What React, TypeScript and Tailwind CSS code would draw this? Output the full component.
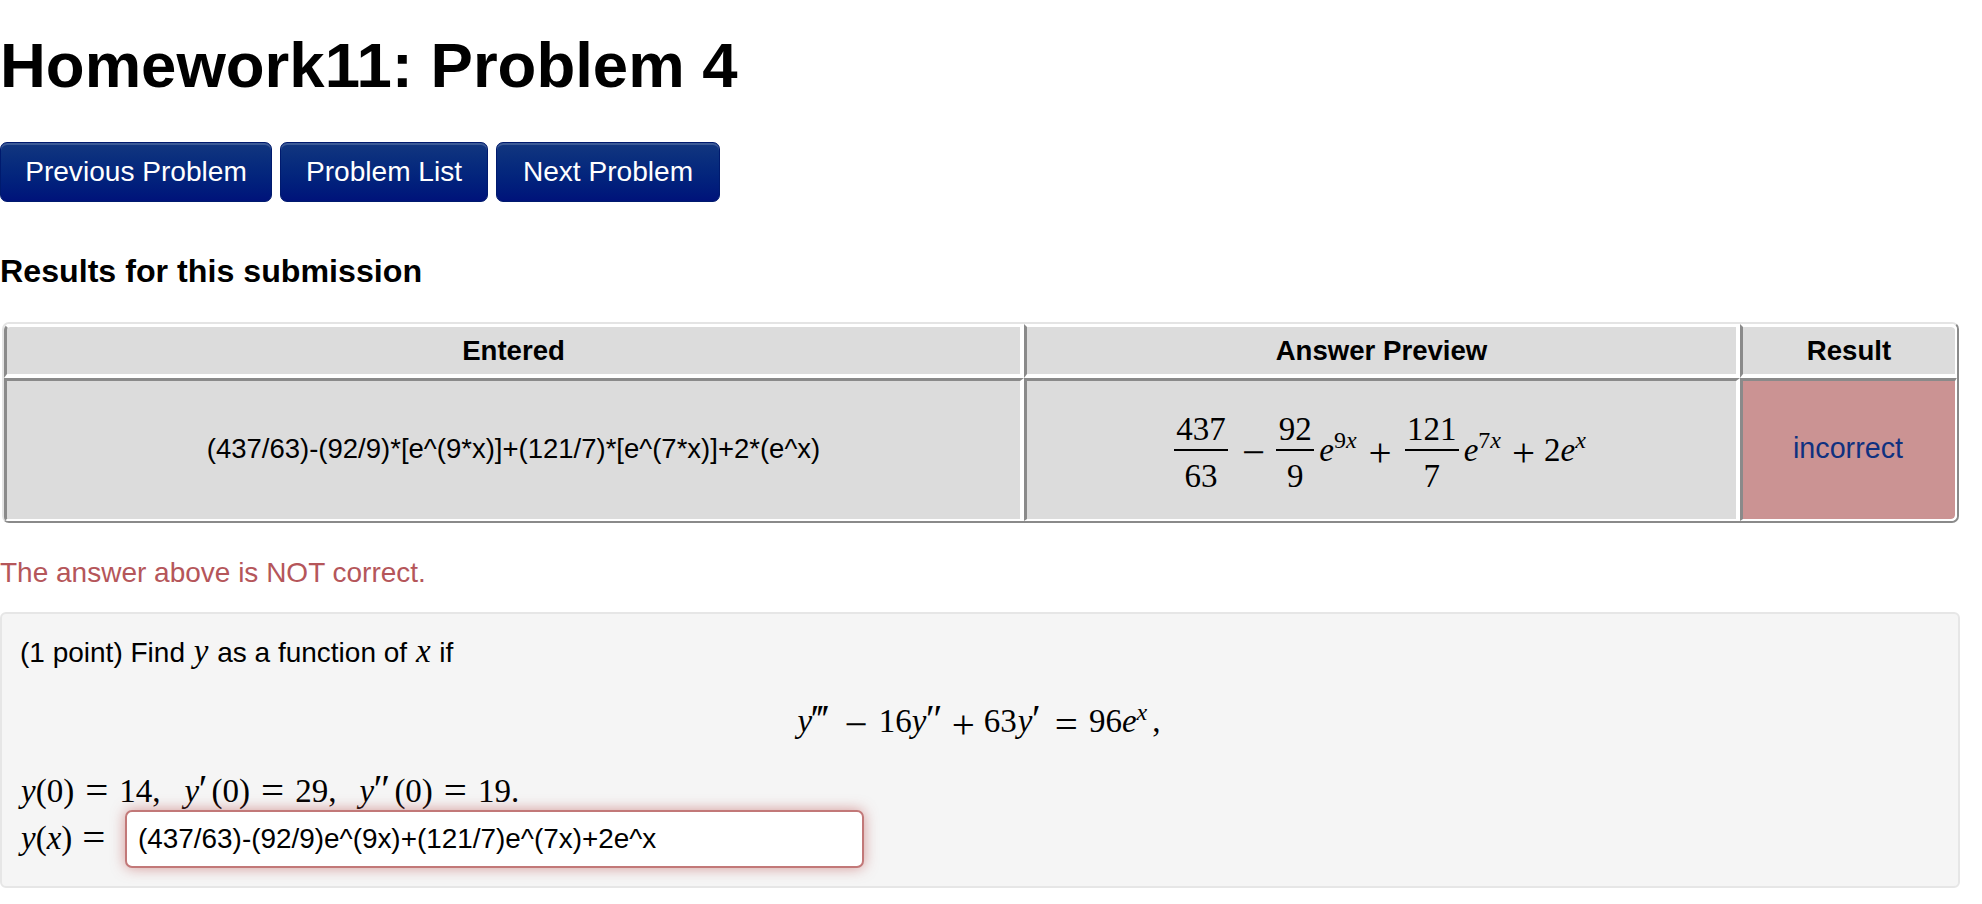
import type { ReactNode } from 'react';

const serif = "font-['Liberation_Serif',serif]";

const Frac = ({ top, bottom, width }: { top: string; bottom: string; width: string }) => (
  <span className={`inline-flex flex-col items-center ${width}`}>
    <span className="leading-[48px] h-[44px]">{top}</span>
    <span className="w-full h-[2px] bg-black" />
    <span className="leading-[50px] h-[44px]">{bottom}</span>
  </span>
);

const Sup = ({ children }: { children: ReactNode }) => (
  <span className="relative -top-[10px] text-[24px] leading-none">{children}</span>
);

// MathJax operators are wider than the Liberation Serif ones at the same size
const Op = ({ children, className }: { children: ReactNode; className: string }) => (
  <span className={`relative top-[2px] text-[41px] leading-none ${className}`}>{children}</span>
);

const Primed = ({ primes, width, className = '' }: { primes: string; width: string; className?: string }) => (
  <span className={`inline-block italic ${width} ${className}`}>
    y<span className="-ml-[3px] text-[40px] leading-none">{primes}</span>
  </span>
);

const NavButton = ({ label, width }: { label: string; width: string }) => (
  <a
    className={`flex items-center justify-center h-[60px] ${width} rounded-[7px] border border-[#001a6e] bg-gradient-to-b from-[#12367f] to-[#00127a] text-white text-[28.1px] shadow-[inset_0_2px_0_rgba(255,255,255,0.18)]`}
  >
    {label}
  </a>
);

export default function App() {
  return (
    <div className="min-h-[904px] bg-white text-black font-['Liberation_Sans',Arial,sans-serif] text-[28px]">
      <h1 className="pt-[29px] h-[142px] text-[63.5px] leading-[72px] font-bold">Homework11: Problem 4</h1>

      <div className="flex gap-[8px]">
        <NavButton label="Previous Problem" width="w-[272px]" />
        <NavButton label="Problem List" width="w-[208px]" />
        <NavButton label="Next Problem" width="w-[224px]" />
      </div>

      <h2 className="mt-[49px] text-[32.2px] leading-[40px] font-bold">Results for this submission</h2>

      <table className="mt-[31px] ml-[2px] w-[1957px] h-[201px] table-fixed border-separate border-spacing-0 rounded-[7px] border-2 border-t-[#e4e4e4] border-l-[#e4e4e4] border-b-[#8a8a8a] border-r-[#8a8a8a] text-[27.6px]">
        <thead>
          <tr>
            <th className="w-[1020px] h-[54px] bg-[#dcdcdc] bg-clip-padding border-t-[3px] border-l-[3px] border-r-[4px] border-b-[4px] border-t-white border-l-[#8a8a8a] border-r-white border-b-white rounded-tl-[6px] font-bold text-center p-0">
              Entered
            </th>
            <th className="w-[716px] h-[54px] bg-[#dcdcdc] bg-clip-padding border-t-[3px] border-l-[3px] border-r-[4px] border-b-[4px] border-t-white border-l-[#8a8a8a] border-r-white border-b-white font-bold text-center p-0">
              Answer Preview
            </th>
            <th className="h-[54px] bg-[#dcdcdc] bg-clip-padding border-t-[3px] border-l-[3px] border-r-2 border-b-[4px] border-t-white border-l-[#8a8a8a] border-r-white border-b-white rounded-tr-[6px] font-bold text-center p-0">
              Result
            </th>
          </tr>
        </thead>
        <tbody>
          <tr>
            <td className="bg-[#dcdcdc] bg-clip-padding border-t-[3px] border-l-[3px] border-r-[4px] border-b-2 border-t-[#8a8a8a] border-l-[#8a8a8a] border-r-white border-b-white rounded-bl-[4px] text-center text-[27.5px] pt-0 pb-[2px] px-0">
              (437/63)-(92/9)*[e^(9*x)]+(121/7)*[e^(7*x)]+2*(e^x)
            </td>
            <td className="bg-[#dcdcdc] bg-clip-padding border-t-[3px] border-l-[3px] border-r-[4px] border-b-2 border-t-[#8a8a8a] border-l-[#8a8a8a] border-r-white border-b-white p-0">
              <div className={`${serif} flex items-center justify-center text-[33px] leading-none pr-[3px]`}>
                <Frac top="437" bottom="63" width="w-[54px]" />
                <Op className="ml-[14px] mr-[11px]">−</Op>
                <Frac top="92" bottom="9" width="w-[38px]" />
                <span className="ml-[5px] italic">e</span>
                <Sup>
                  9<span className="italic">x</span>
                </Sup>
                <Op className="ml-[12px] mr-[13px]">+</Op>
                <Frac top="121" bottom="7" width="w-[54px]" />
                <span className="ml-[5px] italic">e</span>
                <Sup>
                  7<span className="italic">x</span>
                </Sup>
                <Op className="ml-[11px] mr-[9px]">+</Op>
                <span>2</span>
                <span className="italic">e</span>
                <Sup>
                  <span className="italic">x</span>
                </Sup>
              </div>
            </td>
            <td className="bg-[#cb9393] bg-clip-padding border-t-[3px] border-l-[3px] border-r-2 border-b-2 border-t-[#8a8a8a] border-l-[#8a8a8a] border-r-white border-b-white rounded-br-[6px] text-center text-[#0f3180] text-[28.7px] pt-0 pb-[3px] pl-0 pr-[2px]">
              incorrect
            </td>
          </tr>
        </tbody>
      </table>

      <p className="mt-[30px] text-[#b5565a] leading-[40px]">The answer above is NOT correct.</p>

      <div className="mt-[19px] w-[1960px] h-[276px] bg-[#f5f5f5] border-2 border-[#e6e6e6] rounded-[6px] pl-[18px] pt-[17px]">
        <div className="h-[40px] leading-[40px]">
          (1 point) Find <span className={`${serif} italic text-[33px] mx-[1px]`}>y</span> as a function of{' '}
          <span className={`${serif} italic text-[33px] mx-[1px]`}>x</span> if
        </div>
        <div className={`${serif} mt-[21px] h-[60px] flex justify-center items-center text-[33px] whitespace-pre pr-[20px]`}>
          <Primed primes="‴" width="w-[30px]" />
          <Op className="ml-[17px] mr-[11px]">−</Op>
          <span>16</span>
          <Primed primes="″" width="w-[28px]" />
          <Op className="ml-[12px] mr-[9px]">+</Op>
          <span>63</span>
          <Primed primes="′" width="w-[23px]" className="ml-[1px]" />
          <Op className="ml-[14px] mr-[11px]">=</Op>
          <span>96</span>
          <span className="italic">e</span>
          <Sup>
            <span className="italic">x</span>
          </Sup>
          <span className="ml-[5px]">,</span>
        </div>
        <div className={`${serif} mt-[16px] ml-[1px] h-[38px] leading-[38px] text-[33px] whitespace-pre`}>
          <span className="italic">y</span>(0)
          <Op className="mx-[11px]">=</Op>
          14,
          <Primed primes="′" width="w-[24px]" className="ml-[24px]" />
          <span className="ml-[3px]">(0)</span>
          <Op className="mx-[11px]">=</Op>
          29,
          <Primed primes="″" width="w-[33px]" className="ml-[23px]" />
          <span className="ml-[2px]">(0)</span>
          <Op className="mx-[11px]">=</Op>
          19.
        </div>
        <div className="flex items-center h-[58px] mt-[4px]">
          <span className={`${serif} ml-[1px] text-[33px] whitespace-pre w-[104px]`}>
            <span className="italic">y</span>(<span className="italic">x</span>)<Op className="ml-[10px]">=</Op>
          </span>
          <input
            readOnly
            value="(437/63)-(92/9)e^(9x)+(121/7)e^(7x)+2e^x"
            className="w-[739px] h-[58px] px-[11px] bg-white border-2 border-[#c27878] rounded-[7px] outline-none text-[27.9px] shadow-[0_0_14px_rgba(185,74,72,0.55)]"
          />
        </div>
      </div>
    </div>
  );
}
